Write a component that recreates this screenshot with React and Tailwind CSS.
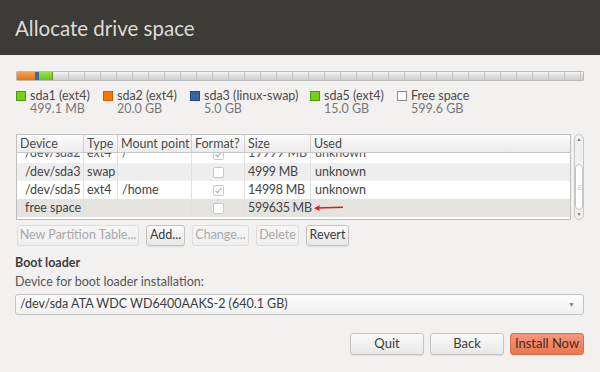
import React from 'react';

const font = { fontFamily: 'Lato, "Noto Sans", sans-serif' };

const legend = [
  { name: 'sda1 (ext4)', size: '499.1 MB', color: 'bg-[#73d216] border-[#4e9a06]', w: 'w-[87px]' },
  { name: 'sda2 (ext4)', size: '20.0 GB', color: 'bg-[#f57900] border-[#ce5c00]', w: 'w-[87px]' },
  { name: 'sda3 (linux-swap)', size: '5.0 GB', color: 'bg-[#3465a4] border-[#204a87]', w: 'w-[120px]' },
  { name: 'sda5 (ext4)', size: '15.0 GB', color: 'bg-[#73d216] border-[#4e9a06]', w: 'w-[87px]' },
  { name: 'Free space', size: '599.6 GB', color: 'bg-white border-[#888]', w: 'w-[100px]' },
];

const rows = [
  { dev: '/dev/sda3', type: 'swap', mount: '', fmt: false, size: '4999 MB', used: 'unknown', bg: 'bg-[#eeeeee]' },
  { dev: '/dev/sda5', type: 'ext4', mount: '/home', fmt: true, size: '14998 MB', used: 'unknown', bg: 'bg-white' },
  { dev: 'free space', type: '', mount: '', fmt: false, size: '599635 MB', used: '', bg: 'bg-[#e4e3e0]', arrow: true },
];

const Check = ({ on }) => (
  <div className="w-[11px] h-[11px] rounded-[2px] border border-[#c8c8c8] bg-white flex items-center justify-center">
    {on && (
      <svg width="9" height="9" viewBox="0 0 9 9">
        <path d="M1.5 4.5 L3.5 6.5 L7.5 2" stroke="#c0c0c0" strokeWidth="1.6" fill="none" />
      </svg>
    )}
  </div>
);

const cols = ['w-[67px]', 'w-[34px]', 'w-[74px]', 'w-[53px]', 'w-[66px]', 'flex-1'];

const Btn = ({ children, w, disabled, className = '' }) => (
  <button
    className={`h-[21px] ${w} rounded-[3px] border text-[12.5px] whitespace-nowrap flex items-center justify-center bg-gradient-to-b ${
      disabled
        ? 'border-[#dcdcdc] from-[#f6f6f6] to-[#efefef] text-[#a9a9a9]'
        : 'border-[#c4c4c4] from-[#fafafa] to-[#e8e8e8] text-[#3c3c3c] shadow-[0_1px_1px_rgba(0,0,0,0.08)]'
    } ${className}`}
  >
    {children}
  </button>
);

export default function App() {
  return (
    <div className="w-[600px] h-[372px] bg-[#f2f1f0] overflow-hidden text-[#3c3c3c]" style={font}>
      <div className="h-[55px] bg-[#3c3b37] flex items-center pl-[15px]">
        <h1 className="text-[20.5px] text-[#dfdbd2] pt-[2px]">Allocate drive space</h1>
      </div>

      <div className="px-[16px]">
        {/* partition bar */}
        <div className="mt-[16px] h-[10px] flex border border-[#b9b9b9] rounded-[1px] overflow-hidden">
          <div className="w-[18px] bg-gradient-to-b from-[#f8a04a] to-[#e37512]" />
          <div className="w-[4px] bg-[#3d6aa7]" />
          <div className="w-[14px] bg-gradient-to-b from-[#9be050] to-[#6cc01c] border-r border-[#5a9f16]" />
          <div className="flex-1 flex bg-gradient-to-b from-[#f4f4f4] via-[#dedede] to-[#cfcfcf]">
            {Array.from({ length: 33 }).map((_, i) => (
              <div key={i} className="w-[16px] border-r border-[#c6c6c6] shrink-0" />
            ))}
          </div>
        </div>

        {/* legend */}
        <div className="flex mt-[8px] text-[12.5px] leading-[13px]">
          {legend.map((l) => (
            <div key={l.name} className={`${l.w} flex`}>
              <div className={`w-[10px] h-[10px] border mt-[2px] mr-[4px] ${l.color}`} />
              <div className="whitespace-nowrap">
                <div className="text-[#4a4a4a]">{l.name}</div>
                <div className="text-[#777]">{l.size}</div>
              </div>
            </div>
          ))}
        </div>

        {/* table */}
        <div className="mt-[19px] flex">
          <div className="w-[555px] h-[86px] border border-[#c0c0c0] bg-white overflow-hidden text-[12.5px] whitespace-nowrap">
            <div className="h-[18px] flex bg-gradient-to-b from-[#fbfbfb] to-[#ebebeb] border-b border-[#c8c8c8] text-[#4a4a4a]">
              {['Device', 'Type', 'Mount point', 'Format?', 'Size', 'Used'].map((h, i) => (
                <div key={h} className={`${cols[i]} px-[3px] leading-[17px] border-r border-[#d0d0d0] last:border-r-0`}>
                  {h}
                </div>
              ))}
            </div>
            <div className="h-[10px] flex bg-white overflow-hidden text-[#555]">
              <div className={`${cols[0]} pl-[8px] leading-[10px] -mt-[5px] border-r border-[#e0e0e0]`}>/dev/sda2</div>
              <div className={`${cols[1]} pl-[3px] leading-[10px] -mt-[5px] border-r border-[#e0e0e0]`}>ext4</div>
              <div className={`${cols[2]} pl-[4px] leading-[10px] -mt-[5px] border-r border-[#e0e0e0]`}>/</div>
              <div className={`${cols[3]} flex justify-center -mt-[4px] border-r border-[#e0e0e0]`}><Check on /></div>
              <div className={`${cols[4]} pl-[3px] leading-[10px] -mt-[5px] border-r border-[#e0e0e0]`}>19999 MB</div>
              <div className={`${cols[5]} pl-[4px] leading-[10px] -mt-[5px]`}>unknown</div>
            </div>
            {rows.map((r) => (
              <div key={r.dev} className={`h-[18px] flex ${r.bg} text-[#444] leading-[18px]`}>
                <div className={`${cols[0]} pl-[8px] border-r border-[#e0e0e0]`}>{r.dev}</div>
                <div className={`${cols[1]} pl-[3px] border-r border-[#e0e0e0]`}>{r.type}</div>
                <div className={`${cols[2]} pl-[4px] border-r border-[#e0e0e0]`}>{r.mount}</div>
                <div className={`${cols[3]} flex justify-center items-center border-r border-[#e0e0e0]`}><Check on={r.fmt} /></div>
                <div className={`${cols[4]} pl-[3px] border-r border-[#e0e0e0] tracking-[-0.3px]`}>{r.size}</div>
                <div className={`${cols[5]} pl-[2px] flex items-center`}>
                  {r.arrow ? (
                    <svg width="32" height="8" viewBox="0 0 32 8">
                      <path d="M3 4 L30 3.3" stroke="#e01b1b" strokeWidth="1.6" />
                      <path d="M1 4.2 L7 1 L6 4 L7 7 Z" fill="#e01b1b" />
                    </svg>
                  ) : (
                    <span className="pl-[2px]">{r.used}</span>
                  )}
                </div>
              </div>
            ))}
          </div>

          {/* scrollbar */}
          <div className="ml-[3px] w-[10px] h-[86px] border border-[#c8c8c8] rounded-[5px] bg-[#f0f0f0] flex flex-col items-center">
            <div className="text-[5px] leading-[7px] text-[#777] mt-[1px]">▲</div>
            <div className="flex-1 w-full">
              <div className="mt-[21px] h-[46px] w-[8px] mx-auto rounded-[4px] border border-[#c4c4c4] bg-white flex flex-col items-center justify-center gap-[1px]">
                <div className="w-[3px] h-px bg-[#ccc]" />
                <div className="w-[3px] h-px bg-[#ccc]" />
                <div className="w-[3px] h-px bg-[#ccc]" />
              </div>
            </div>
            <div className="text-[5px] leading-[7px] text-[#777] mb-[1px]">▼</div>
          </div>
        </div>

        {/* partition buttons */}
        <div className="flex gap-[7px] mt-[5px] ml-px">
          <Btn w="w-[122px]" disabled>New Partition Table...</Btn>
          <Btn w="w-[39px]">Add...</Btn>
          <Btn w="w-[57px]" disabled>Change...</Btn>
          <Btn w="w-[43px]" disabled>Delete</Btn>
          <Btn w="w-[43px]">Revert</Btn>
        </div>

        <div className="mt-[9px] -ml-px text-[12.5px] font-bold text-[#3c3c3c] leading-[16px]">Boot loader</div>
        <div className="mt-[3px] -ml-px text-[12.5px] text-[#555] leading-[16px]">Device for boot loader installation:</div>

        <div className="mt-[4px] -ml-px w-[569px] h-[21px] rounded-[3px] border border-[#c4c4c4] bg-gradient-to-b from-[#fdfdfd] to-[#f0f0f0] flex items-center justify-between pl-[4px] pr-[8px] text-[12.5px] text-[#3c3c3c]">
          <span>/dev/sda ATA WDC WD6400AAKS-2 (640.1 GB)</span>
          <span className="text-[7px] text-[#888]">▼</span>
        </div>

        <div className="flex justify-end gap-[6px] mt-[18px]">
          <Btn w="w-[74px] h-[22px]" className="text-[13px]">Quit</Btn>
          <Btn w="w-[74px] h-[22px]" className="text-[13px]">Back</Btn>
          <button className="h-[22px] w-[74px] rounded-[3px] border border-[#d96f48] bg-gradient-to-b from-[#f5987a] to-[#e9774f] text-[13px] text-[#4a2a1f] whitespace-nowrap">
            Install Now
          </button>
        </div>
      </div>
    </div>
  );
}
